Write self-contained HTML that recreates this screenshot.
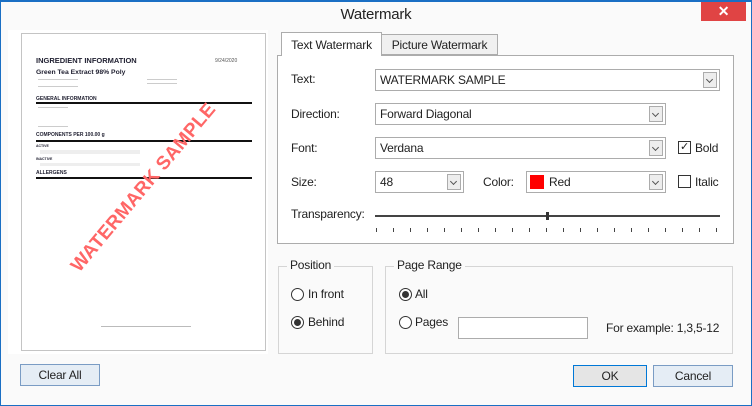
<!DOCTYPE html><html><head><style>
*{box-sizing:border-box}body{margin:0;width:752px;height:406px;overflow:hidden;font-family:"Segoe UI","Liberation Sans",sans-serif;font-size:12px;color:#222;letter-spacing:-0.2px}
.win{position:absolute;left:0;top:0;width:752px;height:406px;border:1px solid #1a6fc4;border-top-width:2px;background:#fafafa}
.a{position:absolute}
.title{left:0;top:0;width:750px;text-align:center;font-size:15px;line-height:26px;color:#222}
.close{left:700px;top:0;width:45px;height:19px;background:#e04444;color:#fff;text-align:center;font-size:14px;line-height:19px;font-weight:bold}
.cb{position:absolute;border:1px solid #acacac;background:#fff;height:22px;padding-left:4px;line-height:20px;font-size:12px}
.cb .ar{position:absolute;right:2px;top:2px;width:14px;height:16px;border:1px solid #acacac;background:#ededed}
.cb .ar:after{content:"";position:absolute;left:3px;top:4px;width:4px;height:4px;border-right:1px solid #555;border-bottom:1px solid #555;transform:rotate(45deg)}
.lbl{position:absolute;font-size:12px}
.chk{position:absolute;width:13px;height:13px;border:1px solid #333;background:#fff}
.rad{position:absolute;width:13px;height:13px;border:1px solid #333;border-radius:50%;background:#fff}
.rad.on:after{content:"";position:absolute;left:2px;top:2px;width:7px;height:7px;border-radius:50%;background:#333}
.btn{position:absolute;height:22px;border:1px solid #adadad;background:#e1e1e1;text-align:center;line-height:20px;font-size:12px}
.grp{position:absolute;border:1px solid #d5d5d5}
.grp span{position:absolute;top:-9px;left:8px;background:#fafafa;padding:0 3px}
.pg{font-family:"Liberation Sans",sans-serif;position:absolute;font-weight:bold;color:#223;letter-spacing:0}
</style></head><body><div class="win">
<div class="a title">Watermark</div>
<div class="a close">✕</div>
<div class="a" style="left:7px;top:28px;width:260px;height:324px;background:#fff"></div>
<div class="a" style="left:20px;top:31px;width:245px;height:318px;border:1px solid #c4c4c4;background:#fff;overflow:hidden">
<div class="pg" style="left:14px;top:22px;font-size:7.5px">INGREDIENT INFORMATION</div>
<div class="pg" style="left:193px;top:24px;font-size:5px;font-weight:normal;color:#555">9/24/2020</div>
<div class="pg" style="left:14px;top:35px;font-size:6.8px">Green Tea Extract 98% Poly</div>
<div class="a" style="left:16px;top:45px;width:40px;height:8px;border-top:1px solid #ccc;border-bottom:1px solid #ccc"></div>
<div class="a" style="left:125px;top:45px;width:30px;height:5px;border-top:1px solid #ccc;border-bottom:1px solid #ccc"></div>
<div class="pg" style="left:14px;top:62px;font-size:5px">GENERAL INFORMATION</div>
<div class="a" style="left:14px;top:68px;width:216px;height:2px;background:#111"></div>
<div class="a" style="left:16px;top:73px;width:30px;height:20px;border-top:1px solid #ccc;border-bottom:1px solid #ccc"></div>
<div class="pg" style="left:14px;top:98px;font-size:5px">COMPONENTS PER 100.00 g</div>
<div class="a" style="left:14px;top:106px;width:216px;height:2px;background:#111"></div>
<div class="pg" style="left:14px;top:110px;font-size:3.5px">ACTIVE</div>
<div class="a" style="left:18px;top:116px;width:100px;height:4px;background:#eee"></div>
<div class="pg" style="left:14px;top:123px;font-size:3.5px">INACTIVE</div>
<div class="a" style="left:18px;top:129px;width:100px;height:3px;background:#eee"></div>
<div class="pg" style="left:14px;top:136px;font-size:5px">ALLERGENS</div>
<div class="a" style="left:14px;top:143px;width:216px;height:2px;background:#111"></div>
<div class="a" style="left:79px;top:292px;width:90px;height:1px;background:#bbb"></div>
<div class="a" style="left:2px;top:143px;width:240px;text-align:center;font-family:'Liberation Sans',sans-serif;font-weight:bold;font-size:19px;color:#f66;transform:rotate(-50deg);transform-origin:center;white-space:nowrap;letter-spacing:0.3px">WATERMARK SAMPLE</div>
</div>
<div class="btn" style="left:19px;top:362px;width:80px;background:#e5edf5;border-color:#7a9cc4">Clear All</div>
<div class="a" style="left:276px;top:53px;width:457px;height:189px;border:1px solid #acacac;background:#fff"></div>
<div class="a" style="left:280px;top:30px;width:101px;height:24px;border:1px solid #acacac;border-bottom:none;background:#fff;text-align:center;line-height:24px">Text Watermark</div>
<div class="a" style="left:381px;top:32px;width:116px;height:21px;border:1px solid #acacac;border-left:none;background:#f0f0f0;text-align:center;line-height:21px">Picture Watermark</div>
<div class="lbl" style="left:290px;top:70px">Text:</div>
<div class="cb" style="left:374px;top:67px;width:345px">WATERMARK SAMPLE<div class="ar"></div></div>
<div class="lbl" style="left:290px;top:105px">Direction:</div>
<div class="cb" style="left:374px;top:101px;width:291px">Forward Diagonal<div class="ar"></div></div>
<div class="lbl" style="left:290px;top:139px">Font:</div>
<div class="cb" style="left:374px;top:135px;width:291px">Verdana<div class="ar"></div></div>
<div class="chk" style="left:677px;top:139px;font-size:11px;line-height:11px;text-align:center">✓</div><div class="lbl" style="left:694px;top:139px">Bold</div>
<div class="lbl" style="left:290px;top:173px">Size:</div>
<div class="cb" style="left:374px;top:169px;width:89px">48<div class="ar"></div></div>
<div class="lbl" style="left:482px;top:173px">Color:</div>
<div class="cb" style="left:525px;top:169px;width:140px;padding-left:3px"><span style="display:inline-block;width:14px;height:14px;background:#f00;vertical-align:-3px;margin-right:5px"></span>Red<div class="ar"></div></div>
<div class="chk" style="left:677px;top:173px"></div><div class="lbl" style="left:694px;top:173px">Italic</div>
<div class="lbl" style="left:290px;top:205px">Transparency:</div>
<div class="a" style="left:374px;top:213px;width:345px;height:2px;background:#444"></div>
<div class="a" style="left:545px;top:210px;width:3px;height:8px;background:#333"></div>
<div class="a" style="left:375px;top:226px;width:345px;height:4px;background:repeating-linear-gradient(90deg,#444 0 1px,transparent 1px 17px)"></div>
<div class="grp" style="left:277px;top:264px;width:95px;height:88px"><span>Position</span></div>
<div class="rad" style="left:290px;top:286px"></div><div class="lbl" style="left:307px;top:285px">In front</div>
<div class="rad on" style="left:290px;top:314px"></div><div class="lbl" style="left:307px;top:313px">Behind</div>
<div class="grp" style="left:384px;top:264px;width:348px;height:88px"><span>Page Range</span></div>
<div class="rad on" style="left:398px;top:286px"></div><div class="lbl" style="left:414px;top:285px">All</div>
<div class="rad" style="left:398px;top:314px"></div><div class="lbl" style="left:414px;top:313px">Pages</div>
<div class="a" style="left:457px;top:315px;width:130px;height:22px;border:1px solid #acacac;background:#fff"></div>
<div class="lbl" style="left:605px;top:319px">For example: 1,3,5-12</div>
<div class="btn" style="left:572px;top:363px;width:74px;background:#e5e5e5;border-color:#0078d7">OK</div>
<div class="btn" style="left:652px;top:363px;width:80px;background:#e5edf5;border-color:#7a9cc4">Cancel</div>
</div></body></html>
